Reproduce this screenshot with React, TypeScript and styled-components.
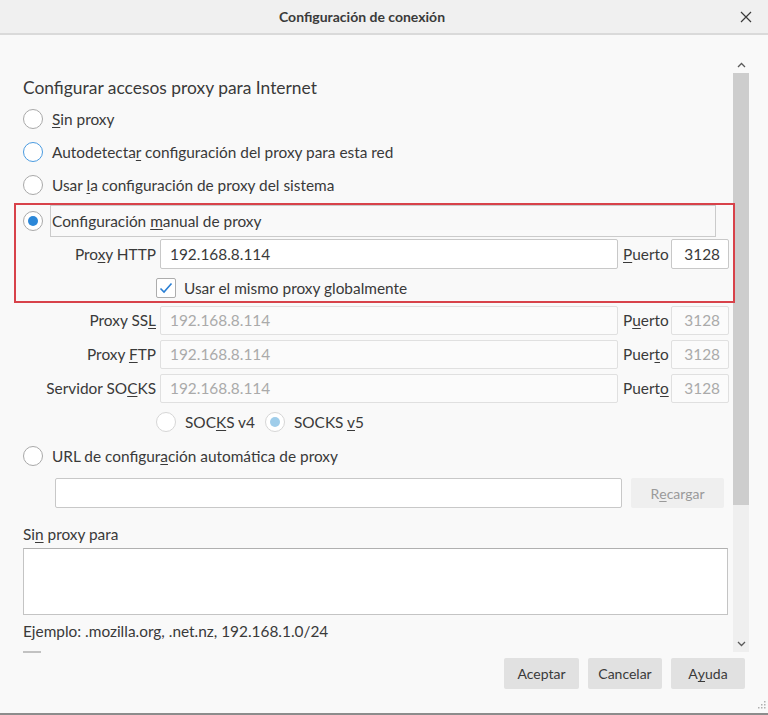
import React from 'react'
import styled, { createGlobalStyle } from 'styled-components'

const GlobalStyle = createGlobalStyle`
    html, body {
        margin: 0;
        padding: 0;
        background: #f9f9f9;
    }
    body {
        font-family: Lato, "Open Sans", sans-serif;
        color: #3a3a3a;
    }
`

const Window = styled.div`
    width: 768px;
    height: 715px;
    display: flex;
    flex-direction: column;
    background: #f9f9f9;
    border-bottom: 2px solid #8c8c8c;
    box-sizing: border-box;
    position: relative;
    overflow: hidden;
`

const TitleBar = styled.div`
    height: 33px;
    flex: none;
    display: flex;
    align-items: center;
    background: #f0f0f0;
    border-bottom: 2px solid #dadada;
`

const Title = styled.div`
    flex: 1;
    text-align: center;
    font-size: 14px;
    font-weight: 700;
    color: #3a3a3a;
`

const Close = styled.div`
    width: 44px;
    display: flex;
    justify-content: center;
    align-items: center;
`

const Main = styled.div`
    height: 619px;
    flex: none;
    display: flex;
    overflow: hidden;
`

const Content = styled.div`
    flex: 1;
    min-width: 0;
    padding-left: 23px;
    display: flex;
    flex-direction: column;
`

const Heading = styled.div`
    margin-top: 42px;
    height: 22px;
    line-height: 22px;
    font-size: 17.4px;
    margin-bottom: 3px;
`

const Row = styled.div<{ $h?: number; $indent?: number; $top?: number }>`
    height: ${(p) => p.$h ?? 33}px;
    padding-left: ${(p) => p.$indent ?? 0}px;
    padding-top: ${(p) => p.$top ?? 0}px;
    box-sizing: border-box;
    display: flex;
    align-items: center;
    font-size: 15.4px;
    flex: none;
`

const Radio = styled.span<{ $checked?: boolean; $disabled?: boolean; $focus?: boolean }>`
    width: 20px;
    height: 20px;
    box-sizing: border-box;
    border-radius: 50%;
    border: ${(p) => (p.$focus ? '1.5px solid #4a9be0' : `1px solid ${p.$disabled ? '#d6d6d6' : '#a9a9a9'}`)};
    background: #fff;
    flex: none;
    display: flex;
    align-items: center;
    justify-content: center;
    margin-right: 9px;

    &::after {
        content: '';
        display: ${(p) => (p.$checked ? 'block' : 'none')};
        width: 10px;
        height: 10px;
        border-radius: 50%;
        background: ${(p) => (p.$disabled ? '#9fcdea' : '#2b87d8')};
    }
`

const U = styled.span`
    text-decoration: underline;
    text-underline-offset: 2px;
    text-decoration-thickness: 1px;
`

const ManualGroup = styled.div`
    position: relative;
    z-index: 1;
    margin: 2px -2px 0 -9px;
    border: 2px solid #d8424a;
    display: flex;
    flex-direction: column;
    flex: none;
`

const FocusLabel = styled.div`
    flex: 1;
    height: 30px;
    margin: -1px 17px 0 -2px;
    padding-left: 1px;
    border: 1px solid #cbcbcb;
    display: flex;
    align-items: center;
`

const FieldLabel = styled.span<{ $w: number }>`
    width: ${(p) => p.$w}px;
    text-align: right;
    padding-right: 4px;
    box-sizing: border-box;
    flex: none;
    white-space: nowrap;
`

const Input = styled.div<{ $w: number; $disabled?: boolean; $right?: boolean; $h?: number }>`
    width: ${(p) => p.$w}px;
    height: ${(p) => p.$h ?? 29}px;
    box-sizing: border-box;
    flex: none;
    border: 1px solid ${(p) => (p.$disabled ? '#e0e0e0' : '#c8c8c8')};
    background: ${(p) => (p.$disabled ? '#fbfbfb' : '#fff')};
    color: ${(p) => (p.$disabled ? '#aaaaaa' : '#3a3a3a')};
    display: flex;
    align-items: center;
    justify-content: ${(p) => (p.$right ? 'flex-end' : 'flex-start')};
    padding: 0 8px 0 9px;
    border-radius: 2px;
`

const PortLabel = styled.span`
    width: 53px;
    padding-left: 5px;
    box-sizing: border-box;
    flex: none;
`

const Check = styled.span`
    width: 20px;
    height: 20px;
    box-sizing: border-box;
    border: 1px solid #adadad;
    background: #fff;
    border-radius: 2px;
    flex: none;
    display: flex;
    align-items: center;
    justify-content: center;
    margin-right: 8px;
`

const OptionLabel = styled.span<{ $gap?: number }>`
    margin-right: ${(p) => p.$gap ?? 0}px;
`

const Button = styled.div<{ $disabled?: boolean; $w: number; $h?: number }>`
    width: ${(p) => p.$w}px;
    height: ${(p) => p.$h ?? 31}px;
    box-sizing: border-box;
    flex: none;
    background: ${(p) => (p.$disabled ? '#efefef' : '#e1e1e1')};
    color: ${(p) => (p.$disabled ? '#9a9a9a' : '#3a3a3a')};
    border-radius: 2px;
    display: flex;
    align-items: center;
    justify-content: center;
    font-size: 14px;
`

const PlainLabel = styled.div<{ $top: number }>`
    margin-top: ${(p) => p.$top}px;
    height: 20px;
    line-height: 20px;
    font-size: 15.4px;
    flex: none;
`

const TextArea = styled.div`
    margin-top: 4px;
    width: 705px;
    height: 67px;
    box-sizing: border-box;
    flex: none;
    background: #fff;
    border: 1px solid #c4c4c4;
    border-top-color: #b0b0b0;
`

const ClippedBox = styled.div`
    margin-top: 10px;
    width: 18px;
    height: 18px;
    flex: none;
    border-top: 2px solid #c2c2c2;
`

const Scrollbar = styled.div`
    width: 16px;
    flex: none;
    margin: 21px 19px 2px 0;
    display: flex;
    flex-direction: column;
`

const Arrow = styled.div`
    height: 17px;
    display: flex;
    align-items: center;
    justify-content: center;
    flex: none;
`

const Thumb = styled.div`
    height: 432px;
    background: #cdcdcd;
    flex: none;
`

const Track = styled.div`
    flex: 1;
    background: #efefef;
    display: flex;
    flex-direction: column;
    justify-content: flex-end;
`

const Footer = styled.div`
    flex: 1;
    display: flex;
    justify-content: flex-end;
    align-items: flex-start;
    gap: 9px;
    padding: 4px 23px 0 0;
`

const Grip = styled.svg`
    position: absolute;
    right: 2px;
    bottom: 4px;
`

const Chevron = ({ up }: { up?: boolean }) => (
    <svg width='9' height='6' viewBox='0 0 9 6'>
        <path
            d={up ? 'M1 5 L4.5 1.5 L8 5' : 'M1 1 L4.5 4.5 L8 1'}
            fill='none'
            stroke='#5a5a5a'
            strokeWidth='1.3'
        />
    </svg>
)

const fields = [
    { label: <>Proxy SS<U>L</U></>, port: <>P<U>u</U>erto</> },
    { label: <>Proxy <U>F</U>TP</>, port: <>Puer<U>t</U>o</> },
    { label: <>Servidor SO<U>C</U>KS</>, port: <>Puert<U>o</U></> },
]

const App = () => {
    return (
        <Window>
            <GlobalStyle />
            <TitleBar>
                <Title>Configuración de conexión</Title>
                <Close>
                    <svg width='12' height='12' viewBox='0 0 12 12'>
                        <path d='M1 1 L11 11 M11 1 L1 11' stroke='#3a3a3a' strokeWidth='1.2' />
                    </svg>
                </Close>
            </TitleBar>

            <Main>
                <Content>
                    <Heading>Configurar accesos proxy para Internet</Heading>
                    <Row>
                        <Radio />
                        <span><U>S</U>in proxy</span>
                    </Row>
                    <Row>
                        <Radio $focus />
                        <span>Autodetecta<U>r</U> configuración del proxy para esta red</span>
                    </Row>
                    <Row>
                        <Radio />
                        <span>Usar <U>l</U>a configuración de proxy del sistema</span>
                    </Row>

                    <ManualGroup>
                        <Row $h={32} $indent={7}>
                            <Radio $checked />
                            <FocusLabel>
                                <span>Configuración <U>m</U>anual de proxy</span>
                            </FocusLabel>
                        </Row>
                        <Row $h={34}>
                            <FieldLabel $w={144}>Pro<U>x</U>y HTTP</FieldLabel>
                            <Input $w={458} $h={30}>192.168.8.114</Input>
                            <PortLabel><U>P</U>uerto</PortLabel>
                            <Input $w={58} $h={30} $right>3128</Input>
                        </Row>
                        <Row $h={30} $top={3} $indent={140}>
                            <Check>
                                <svg width='14' height='12' viewBox='0 0 14 12'>
                                    <path d='M1.5 6.5 L5 10 L12.5 1.5' fill='none' stroke='#2a7fd4' strokeWidth='1.6' />
                                </svg>
                            </Check>
                            <span>Usar el mismo proxy <U>g</U>lobalmente</span>
                        </Row>
                    </ManualGroup>

                    {fields.map((f, i) => (
                        <Row key={i} $h={34}>
                            <FieldLabel $w={137}>{f.label}</FieldLabel>
                            <Input $w={458} $disabled>192.168.8.114</Input>
                            <PortLabel>{f.port}</PortLabel>
                            <Input $w={58} $disabled $right>3128</Input>
                        </Row>
                    ))}

                    <Row $h={34} $indent={133}>
                        <Radio $disabled />
                        <OptionLabel $gap={10}>SOC<U>K</U>S v4</OptionLabel>
                        <Radio $disabled $checked />
                        <span>SOCKS <U>v</U>5</span>
                    </Row>
                    <Row $h={34}>
                        <Radio />
                        <span>URL de configur<U>a</U>ción automática de proxy</span>
                    </Row>
                    <Row $h={35} $top={5} $indent={32}>
                        <Input $w={567} $h={30} />
                        <span style={{ width: 9 }} />
                        <Button $w={93} $h={30} $disabled>R<U>e</U>cargar</Button>
                    </Row>

                    <PlainLabel $top={16}>Si<U>n</U> proxy para</PlainLabel>
                    <TextArea />
                    <PlainLabel $top={6}>Ejemplo: .mozilla.org, .net.nz, 192.168.1.0/24</PlainLabel>
                    <ClippedBox />
                </Content>

                <Scrollbar>
                    <Arrow><Chevron up /></Arrow>
                    <Thumb />
                    <Track>
                        <Arrow><Chevron /></Arrow>
                    </Track>
                </Scrollbar>
            </Main>

            <Footer>
                <Button $w={75}>Aceptar</Button>
                <Button $w={74}>Cancelar</Button>
                <Button $w={74}>A<U>y</U>uda</Button>
            </Footer>

            <Grip width='8' height='8' viewBox='0 0 8 8'>
                <rect x='6' y='0' width='1.5' height='1.5' fill='#b0b0b0' />
                <rect x='3' y='3' width='1.5' height='1.5' fill='#b0b0b0' />
                <rect x='6' y='3' width='1.5' height='1.5' fill='#b0b0b0' />
                <rect x='0' y='6' width='1.5' height='1.5' fill='#b0b0b0' />
                <rect x='3' y='6' width='1.5' height='1.5' fill='#b0b0b0' />
                <rect x='6' y='6' width='1.5' height='1.5' fill='#b0b0b0' />
            </Grip>
        </Window>
    )
}

export default App
